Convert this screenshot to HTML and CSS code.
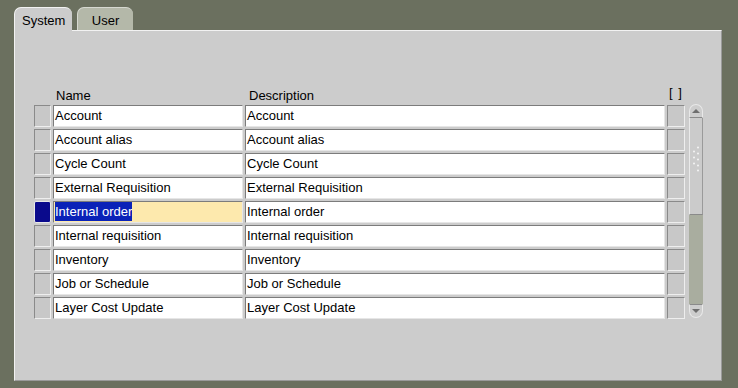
FILE: index.html
```html
<!DOCTYPE html>
<html lang="en">

<head>
  <meta charset="UTF-8" />
  <title>Transaction Types</title>
  <link rel="stylesheet" href="styles.css">
</head>

<body>
  <div class="window">
    <div class="tabs">
      <div class="tab active">System</div>
      <div class="tab">User</div>
    </div>

    <div class="panel">
      <div class="grid">
        <div class="head">
          <span class="h-sel"></span>
          <span class="h-name">Name</span>
          <span class="h-desc">Description</span>
          <span class="h-extra">[ ]</span>
        </div>

        <div class="body">
          <div class="rows" id="rows"></div>

          <div class="scrollbar">
            <div class="btn up"><span class="arrow"></span></div>
            <div class="thumb">
              <svg width="9" height="26" viewBox="0 0 9 26">
                <circle cx="6" cy="1.5" r="1" fill="#f4f4f4" />
                <circle cx="2" cy="5.5" r="1" fill="#f4f4f4" />
                <circle cx="6" cy="7.5" r="1" fill="#f4f4f4" />
                <circle cx="2" cy="11.5" r="1" fill="#f4f4f4" />
                <circle cx="6" cy="13.5" r="1" fill="#f4f4f4" />
                <circle cx="2" cy="17.5" r="1" fill="#f4f4f4" />
                <circle cx="6" cy="19.5" r="1" fill="#f4f4f4" />
                <circle cx="6" cy="24.5" r="1" fill="#f4f4f4" />
              </svg>
            </div>
            <div class="track"></div>
            <div class="btn down"><span class="arrow"></span></div>
          </div>
        </div>
      </div>
    </div>
  </div>

  <script>
    // transaction source types shown in the grid
    const types = [
      ["Account", "Account"],
      ["Account alias", "Account alias"],
      ["Cycle Count", "Cycle Count"],
      ["External Requisition", "External Requisition"],
      ["Internal order", "Internal order"],
      ["Internal requisition", "Internal requisition"],
      ["Inventory", "Inventory"],
      ["Job or Schedule", "Job or Schedule"],
      ["Layer Cost Update", "Layer Cost Update"]
    ];
    const current = 4;

    const rows = document.getElementById("rows");
    types.forEach((t, i) => {
      const row = document.createElement("div");
      row.className = "row" + (i === current ? " current" : "");
      const name = i === current ? `<mark>${t[0]}</mark>` : t[0];
      row.innerHTML = `
        <div class="sel"></div>
        <div class="field name">${name}</div>
        <div class="field desc">${t[1]}</div>
        <div class="extra"></div>
      `;
      rows.appendChild(row);
    });
  </script>
</body>

</html>
```

FILE: styles.css
```css
* {
  box-sizing: border-box;
  margin: 0;
  padding: 0;
  font-family: 'Liberation Sans', Arial, sans-serif;
}

body {
  background-color: #6b705f;
  color: #000;
  font-size: 13px;
  width: 738px;
  height: 388px;
  overflow: hidden;
}

.window {
  padding: 7px 0 0 14px;
}

.tabs {
  display: flex;
  gap: 5px;
  height: 23px;
}

.tab {
  width: 56px;
  background: #b4b8a9;
  border-radius: 7px 7px 0 0;
  border-top: 1px solid #d6d8d0;
  border-left: 1px solid #d6d8d0;
  text-align: center;
  line-height: 21px;
  padding-top: 2px;
}

.tab.active {
  width: 58px;
  background: #cccccc;
  border-top: 1px solid #f2f2f2;
  border-left: 1px solid #f2f2f2;
  height: 24px;
  position: relative;
  z-index: 1;
  text-align: left;
  padding-left: 7px;
}

.panel {
  width: 708px;
  height: 351px;
  background: #cccccc;
  border-top: 1px solid #f2f2f2;
  border-left: 1px solid #f2f2f2;
  border-right: 1px solid #9a9a9a;
  border-bottom: 1px solid #9a9a9a;
  padding: 58px 0 0 19px;
}

.head {
  display: flex;
  gap: 2px;
  height: 16px;
  line-height: 13px;
}

.h-sel {
  width: 17px;
}

.h-name {
  width: 190px;
  padding-left: 3px;
}

.h-desc {
  width: 420px;
  padding-left: 4px;
}

.h-extra {
  width: 18px;
  padding-left: 2px;
  margin-top: -3px;
  letter-spacing: 1px;
}

.body {
  display: flex;
  gap: 4px;
}

.rows {
  display: flex;
  flex-direction: column;
  gap: 2px;
}

.row {
  display: flex;
  gap: 2px;
  height: 22px;
}

.sel,
.extra {
  width: 17px;
  background: #c8c8c8;
  border: 1px solid;
  border-color: #8a8a8a #eeeeee #eeeeee #8a8a8a;
}

.extra {
  width: 18px;
}

.row.current .sel {
  background: #0a0a8c;
  border-color: #e8e8e8;
  border-radius: 2px;
}

.field {
  background: #fff;
  border: 1px solid;
  border-color: #7c7c7c #e6e6e6 #e6e6e6 #7c7c7c;
  padding-left: 1px;
  line-height: 20px;
  white-space: nowrap;
  overflow: hidden;
}

.name {
  width: 190px;
}

.desc {
  width: 420px;
}

.row.current .name {
  background: #fde9ad;
}

mark {
  background: #0a22b8;
  color: #fff;
  padding: 2px 0;
}

.scrollbar {
  width: 14px;
  height: 214px;
  margin-top: -1px;
  display: flex;
  flex-direction: column;
}

.btn {
  height: 14px;
  background: #cdcdcd;
  border: 1px solid #e8e8e8;
  display: flex;
  justify-content: center;
}

.btn.up {
  border-radius: 7px 7px 0 0;
  border-bottom-color: #8a8a8a;
  align-items: center;
}

.btn.down {
  border-radius: 0 0 7px 7px;
  border-top-color: #8a8a8a;
  align-items: center;
}

.arrow {
  width: 0;
  height: 0;
  border-left: 4px solid transparent;
  border-right: 4px solid transparent;
}

.up .arrow {
  border-bottom: 4px solid #6e6e6e;
}

.down .arrow {
  border-top: 4px solid #6e6e6e;
}

.thumb {
  height: 97px;
  background: #cbcbcb;
  border-left: 1px solid #eaeaea;
  border-right: 1px solid #9a9a9a;
  border-bottom: 1px solid #8a8a8a;
  display: flex;
  align-items: center;
  justify-content: center;
  padding-bottom: 14px;
}

.track {
  flex: 1;
  background: #a9ad9f;
}
```
